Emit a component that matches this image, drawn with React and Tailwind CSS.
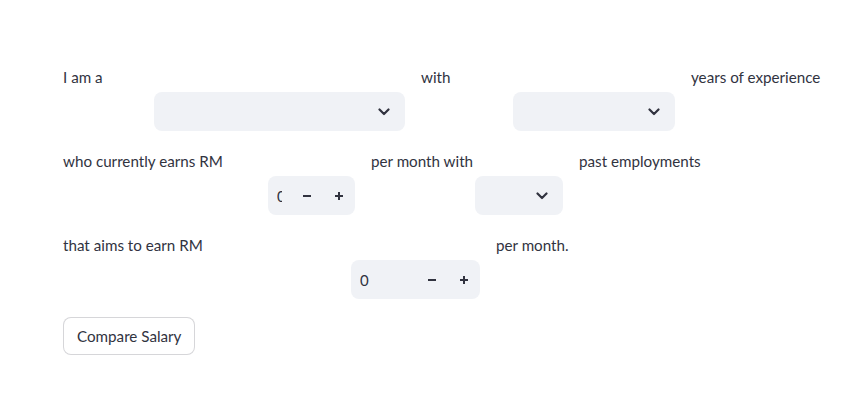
import React from "react";

// ── Streamlit-like salary form ──

const font = { fontFamily: '"Source Sans Pro", Lato, "Liberation Sans", sans-serif' };

function Chevron() {
    return (
        <svg width="12" height="8" viewBox="0 0 12 8" className="shrink-0">
            <path d="M1.5 1.5L6 6l4.5-4.5" fill="none" stroke="#31333F" strokeWidth="2.2" strokeLinecap="round" strokeLinejoin="round" />
        </svg>
    );
}

function Select({ width }) {
    return (
        <div className="mt-[27px] h-[39px] rounded-lg bg-[#f0f2f6] flex items-center justify-end pr-[15px]" style={{ width }}>
            <Chevron />
        </div>
    );
}

function Minus() {
    return (
        <svg width="10" height="10" viewBox="0 0 10 10"><path d="M1 5h8" stroke="#31333F" strokeWidth="2" /></svg>
    );
}

function Plus() {
    return (
        <svg width="10" height="10" viewBox="0 0 10 10"><path d="M1 5h8M5 1v8" stroke="#31333F" strokeWidth="2" /></svg>
    );
}

function NumberInput({ width, clip }) {
    return (
        <div className="mt-[27px] h-[39px] rounded-lg bg-[#f0f2f6] flex items-center" style={{ width }}>
            <div className="flex-1 min-w-0 h-full flex items-center pl-[9px]">
                <div className={clip ? "w-[5px] overflow-hidden" : "overflow-hidden"}>
                    <span className="text-[15px] text-[#31333F]">0</span>
                </div>
            </div>
            <div className="w-8 h-full flex items-center justify-center"><Minus /></div>
            <div className="w-8 h-full flex items-center justify-center"><Plus /></div>
        </div>
    );
}

function Text({ children, w }) {
    return (
        <div className="shrink-0 text-[15.2px] leading-[25.6px] text-[#31333F] whitespace-nowrap" style={{ width: w }}>
            {children}
        </div>
    );
}

export default function App() {
    return (
        <div className="w-[850px] h-[406px] bg-white pl-[63px] pt-[65px] overflow-hidden" style={font}>
            <div className="flex flex-col gap-[18px]">
                <div className="flex gap-4">
                    <Text w={75}>I am a</Text>
                    <Select width={251} />
                    <Text w={76}>with</Text>
                    <Select width={162} />
                    <Text>years of experience</Text>
                </div>
                <div className="flex gap-4">
                    <Text w={189}>who currently earns RM</Text>
                    <NumberInput width={87} clip />
                    <Text w={88}>per month with</Text>
                    <Select width={88} />
                    <Text>past employments</Text>
                </div>
                <div className="flex gap-4">
                    <Text w={272}>that aims to earn RM</Text>
                    <NumberInput width={129} />
                    <Text>per month.</Text>
                </div>
                <div>
                    <button className="h-[38px] px-[13px] rounded-lg border border-[rgba(49,51,63,0.2)] bg-white text-[15.2px] text-[#31333F]">
                        Compare Salary
                    </button>
                </div>
            </div>
        </div>
    );
}
